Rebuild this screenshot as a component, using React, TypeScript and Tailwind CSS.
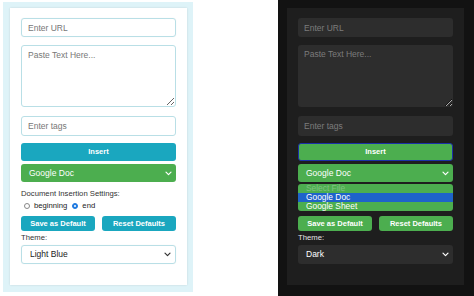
import React from "react";

const Chevron = ({ color }: { color: string }) => (
  <svg width="7" height="5" viewBox="0 0 7 5" fill="none">
    <path d="M1 1.2 L3.5 3.7 L6 1.2" stroke={color} strokeWidth="1.2" strokeLinecap="round" strokeLinejoin="round" />
  </svg>
);

function LightPanel() {
  return (
    <div className="mt-[2px] ml-[3px] w-[190px] h-[290px] bg-[#def3f8] pt-[6px] pl-[7px]">
      <div className="w-[177px] h-[277px] bg-white shadow-[0_0_2px_rgba(0,0,0,0.12)] px-[11px] pt-[10px] flex flex-col">
        <input
          className="h-[19px] w-full rounded-[3px] border border-[#b9dfe6] px-[6px] text-[8.5px] text-[#333] placeholder:text-[#777] outline-none shadow-[0_0_1px_rgba(0,0,0,0.1)]"
          placeholder="Enter URL"
        />
        <textarea
          className="mt-[8px] h-[62px] w-full rounded-[3px] border border-[#b9dfe6] px-[6px] py-[4px] text-[8.5px] text-[#333] placeholder:text-[#777] outline-none leading-[10px]"
          placeholder="Paste Text Here..."
        />
        <input
          className="mt-[9px] h-[20px] w-full rounded-[3px] border border-[#b9dfe6] px-[6px] text-[8.5px] text-[#333] placeholder:text-[#777] outline-none"
          placeholder="Enter tags"
        />
        <div className="mt-[7px] h-[18px] w-full rounded-[3px] bg-[#1aa7bf] flex items-center justify-center text-white text-[7.5px] font-bold">
          Insert
        </div>
        <div className="mt-[3px] h-[18px] w-full rounded-[3px] bg-[#4cae4f] flex items-center justify-between pl-[8px] pr-[4px] text-white text-[8.5px]">
          <span>Google Doc</span>
          <Chevron color="#ffffff" />
        </div>
        <div className="mt-[7px] text-[7.7px] leading-[10px] text-[#333]">Document Insertion Settings:</div>
        <div className="mt-[2px] flex items-center h-[10px] pl-[3px] text-[7.7px] text-[#222]">
          <span className="w-[6px] h-[6px] rounded-full border border-[#888] bg-white" />
          <span className="ml-[4px]">beginning</span>
          <span className="ml-[5px] w-[6px] h-[6px] rounded-full bg-[#1f7ae0] border border-[#1f7ae0] flex items-center justify-center">
            <span className="w-[2px] h-[2px] rounded-full bg-white" />
          </span>
          <span className="ml-[4px]">end</span>
        </div>
        <div className="mt-[5px] flex gap-[7px]">
          <div className="h-[15px] flex-1 rounded-[3px] bg-[#1aa7bf] flex items-center justify-center text-white text-[7.5px] font-bold">
            Save as Default
          </div>
          <div className="h-[15px] flex-1 rounded-[3px] bg-[#1aa7bf] flex items-center justify-center text-white text-[7.5px] font-bold">
            Reset Defaults
          </div>
        </div>
        <div className="mt-[2px] text-[7.7px] leading-[10px] text-[#333]">Theme:</div>
        <div className="mt-[2px] h-[19px] w-full rounded-[3px] border border-[#b9dfe6] shadow-[0_0_1px_rgba(0,0,0,0.1)] flex items-center justify-between pl-[8px] pr-[4px] text-[8.5px] text-[#222]">
          <span>Light Blue</span>
          <Chevron color="#333333" />
        </div>
      </div>
    </div>
  );
}

function DarkPanel() {
  return (
    <div className="w-[196px] h-[296px] bg-[#121212] pt-[8px] pl-[9px]">
      <div className="w-[177px] h-[277px] bg-[#1e1e1e] px-[11px] pt-[10px] flex flex-col">
        <input
          className="h-[19px] w-full rounded-[3px] bg-[#2d2d2d] px-[6px] text-[8.5px] text-[#ddd] placeholder:text-[#7c7c7c] outline-none"
          placeholder="Enter URL"
        />
        <textarea
          className="mt-[8px] h-[62px] w-full rounded-[3px] bg-[#2d2d2d] px-[6px] py-[4px] text-[8.5px] text-[#ddd] placeholder:text-[#7c7c7c] outline-none leading-[10px]"
          placeholder="Paste Text Here..."
        />
        <input
          className="mt-[9px] h-[20px] w-full rounded-[3px] bg-[#2d2d2d] px-[6px] text-[8.5px] text-[#ddd] placeholder:text-[#7c7c7c] outline-none"
          placeholder="Enter tags"
        />
        <div className="mt-[7px] h-[18px] w-full rounded-[3px] bg-[#4cae4f] border border-[#1b2fa8] flex items-center justify-center text-white text-[7.5px] font-bold">
          Insert
        </div>
        <div className="mt-[3px] h-[18px] w-full rounded-[3px] bg-[#4cae4f] flex items-center justify-between pl-[8px] pr-[4px] text-white text-[8.5px]">
          <span>Google Doc</span>
          <Chevron color="#ffffff" />
        </div>
        <div className="mt-[2px] h-[27px] w-full rounded-[3px] bg-[#4cae4f] overflow-hidden text-[8.4px]">
          <div className="pl-[8px] h-[9px] leading-[9px] text-[#80c282]">Select File</div>
          <div className="pl-[8px] h-[9px] leading-[9px] bg-[#1e63c9] text-white">Google Doc</div>
          <div className="pl-[8px] h-[9px] leading-[9px] text-white">Google Sheet</div>
        </div>
        <div className="mt-[5px] flex gap-[7px]">
          <div className="h-[15px] flex-1 rounded-[3px] bg-[#4cae4f] flex items-center justify-center text-white text-[7.5px] font-bold">
            Save as Default
          </div>
          <div className="h-[15px] flex-1 rounded-[3px] bg-[#4cae4f] flex items-center justify-center text-white text-[7.5px] font-bold">
            Reset Defaults
          </div>
        </div>
        <div className="mt-[2px] text-[7.7px] leading-[10px] text-[#e5e5e5]">Theme:</div>
        <div className="mt-[2px] h-[19px] w-full rounded-[3px] bg-[#2d2d2d] flex items-center justify-between pl-[8px] pr-[4px] text-[8.5px] text-white">
          <span>Dark</span>
          <Chevron color="#ffffff" />
        </div>
      </div>
    </div>
  );
}

export default function App() {
  return (
    <div
      className="w-[474px] h-[296px] bg-white flex overflow-hidden"
      style={{ fontFamily: '"Liberation Sans", Arial, sans-serif' }}
    >
      <LightPanel />
      <div className="flex-1" />
      <DarkPanel />
    </div>
  );
}
